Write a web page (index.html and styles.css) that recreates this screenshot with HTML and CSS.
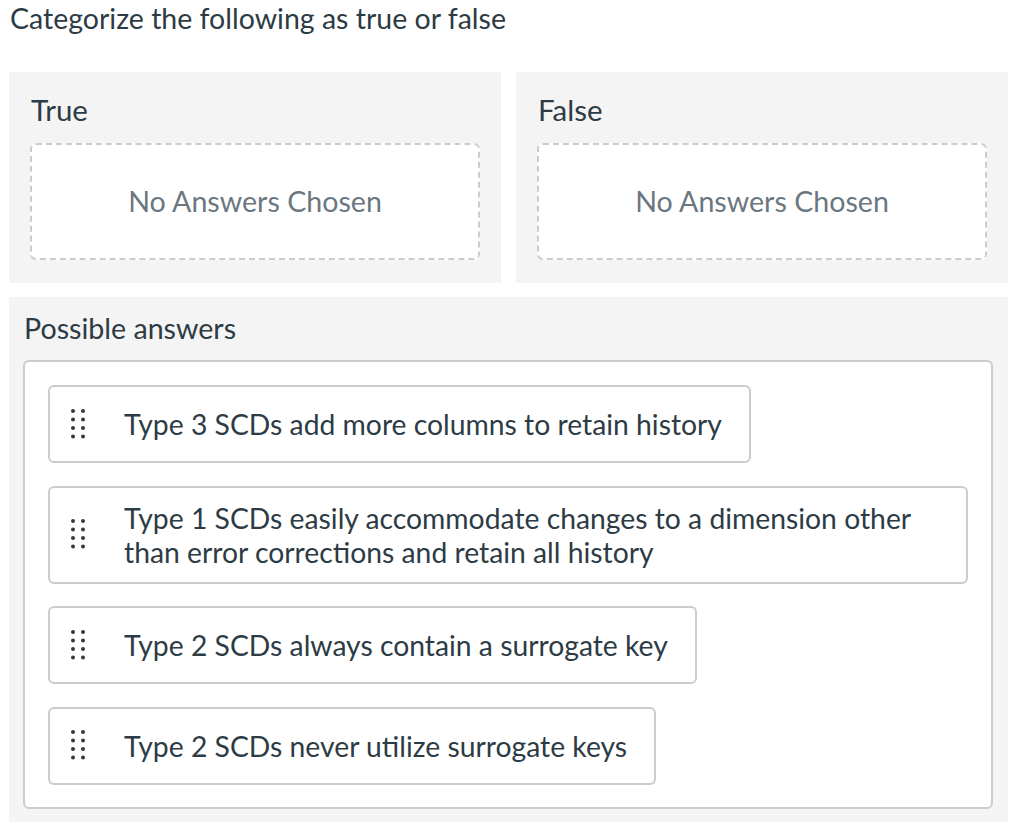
FILE: index.html
```html
<!DOCTYPE html>
<html lang="en">
<head>
<meta charset="utf-8">
<title>Categorize</title>
<link rel="stylesheet" href="styles.css">
</head>
<body>
<div class="page">
  <h1 class="title">Categorize the following as true or false</h1>
  <div class="categories">
    <section class="category">
      <h2 class="category-label">True</h2>
      <div class="dropzone">No Answers Chosen</div>
    </section>
    <section class="category">
      <h2 class="category-label">False</h2>
      <div class="dropzone">No Answers Chosen</div>
    </section>
  </div>
  <section class="possible">
    <h2 class="possible-label">Possible answers</h2>
    <div class="answer-box">
      <div class="answer">
        <svg class="handle" width="14" height="31" viewBox="0 0 14 31"><g fill="#2D3B45"><circle cx="2" cy="2" r="2"/><circle cx="12" cy="2" r="2"/><circle cx="2" cy="10.5" r="2"/><circle cx="12" cy="10.5" r="2"/><circle cx="2" cy="19" r="2"/><circle cx="12" cy="19" r="2"/><circle cx="2" cy="27.5" r="2"/><circle cx="12" cy="27.5" r="2"/></g></svg>
        <span class="answer-text">Type 3 SCDs add more columns to retain history</span>
      </div>
      <div class="answer">
        <svg class="handle" width="14" height="31" viewBox="0 0 14 31"><g fill="#2D3B45"><circle cx="2" cy="2" r="2"/><circle cx="12" cy="2" r="2"/><circle cx="2" cy="10.5" r="2"/><circle cx="12" cy="10.5" r="2"/><circle cx="2" cy="19" r="2"/><circle cx="12" cy="19" r="2"/><circle cx="2" cy="27.5" r="2"/><circle cx="12" cy="27.5" r="2"/></g></svg>
        <span class="answer-text">Type 1 SCDs easily accommodate changes to a dimension other than error corrections and retain all history</span>
      </div>
      <div class="answer">
        <svg class="handle" width="14" height="31" viewBox="0 0 14 31"><g fill="#2D3B45"><circle cx="2" cy="2" r="2"/><circle cx="12" cy="2" r="2"/><circle cx="2" cy="10.5" r="2"/><circle cx="12" cy="10.5" r="2"/><circle cx="2" cy="19" r="2"/><circle cx="12" cy="19" r="2"/><circle cx="2" cy="27.5" r="2"/><circle cx="12" cy="27.5" r="2"/></g></svg>
        <span class="answer-text">Type 2 SCDs always contain a surrogate key</span>
      </div>
      <div class="answer">
        <svg class="handle" width="14" height="31" viewBox="0 0 14 31"><g fill="#2D3B45"><circle cx="2" cy="2" r="2"/><circle cx="12" cy="2" r="2"/><circle cx="2" cy="10.5" r="2"/><circle cx="12" cy="10.5" r="2"/><circle cx="2" cy="19" r="2"/><circle cx="12" cy="19" r="2"/><circle cx="2" cy="27.5" r="2"/><circle cx="12" cy="27.5" r="2"/></g></svg>
        <span class="answer-text">Type 2 SCDs never utilize surrogate keys</span>
      </div>
    </div>
  </section>
</div>
</body>
</html>
```

FILE: styles.css
```css
* { box-sizing: border-box; }

html, body {
  margin: 0;
  padding: 0;
  background: #ffffff;
}

body {
  font-family: Lato, "Open Sans", "Liberation Sans", sans-serif;
  color: #2D3B45;
}

.page {
  padding: 2px 22px 0 9px;
}

.title {
  margin: 0 0 36px 1px;
  font-size: 28.5px;
  font-weight: 400;
  line-height: 33.6px;
}

.categories {
  display: flex;
  gap: 15px;
}

.category {
  flex: 1 1 0;
  background: #F4F4F4;
  padding: 20px 21px 23px 21px;
}

.category-label {
  margin: 0 0 15px 1px;
  font-size: 29.5px;
  font-weight: 400;
  line-height: 36px;
}

.dropzone {
  height: 117px;
  background: #ffffff;
  border: 2px dashed #C7CDD1;
  border-radius: 6px;
  display: flex;
  align-items: center;
  justify-content: center;
  font-size: 28.6px;
  color: #6B7780;
}

.possible {
  margin-top: 14px;
  background: #F4F4F4;
  padding: 15px 15px 15px 14px;
}

.possible-label {
  margin: 0 0 15px 1px;
  font-size: 28.6px;
  font-weight: 400;
  line-height: 33.6px;
}

.answer-box {
  background: #ffffff;
  border: 2px solid #C7CDD1;
  border-radius: 6px;
  padding: 23px 23px 22px 23px;
  display: flex;
  flex-direction: column;
  align-items: flex-start;
  gap: 22.5px;
}

.answer {
  display: flex;
  align-items: center;
  min-height: 78px;
  max-width: 100%;
  background: #ffffff;
  border: 2px solid #C7CDD1;
  border-radius: 6px;
  padding: 13px 27px 13px 21px;
}

.handle {
  flex: 0 0 auto;
  display: block;
}

.answer-text {
  margin-left: 39px;
  font-size: 28.3px;
  line-height: 34px;
}
```
